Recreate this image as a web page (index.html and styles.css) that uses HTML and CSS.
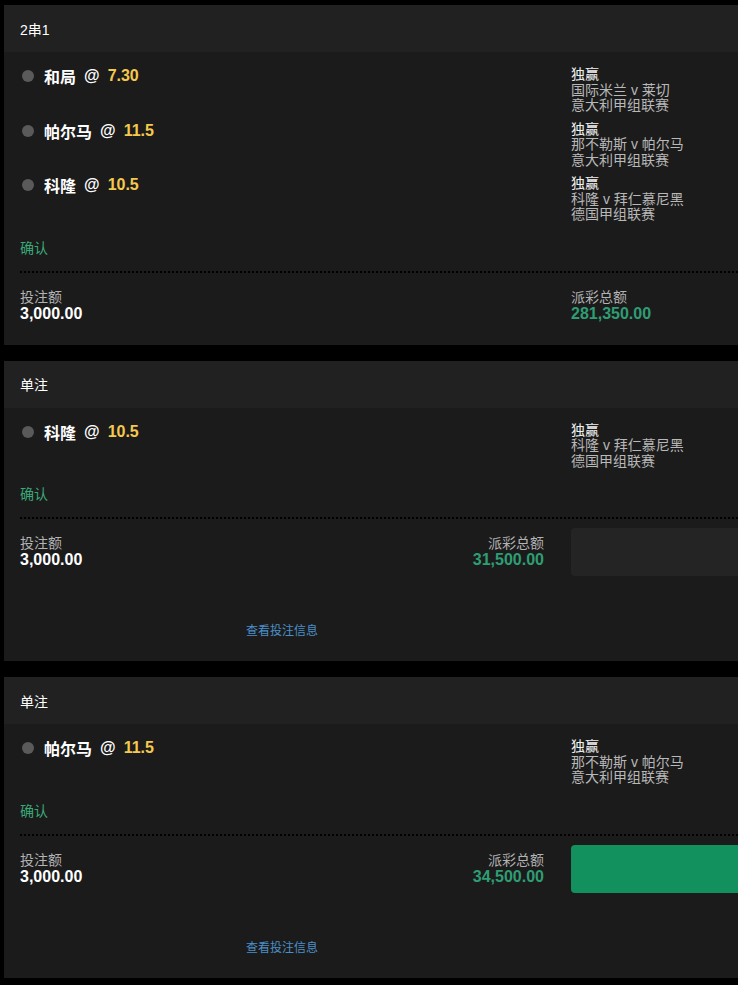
FILE: index.html
```html
<!DOCTYPE html>
<html lang="zh-CN">
<head>
    <meta charset="UTF-8">
    <meta name="viewport" content="width=device-width, initial-scale=1.0">
    <title>投注记录</title>
    <link rel="stylesheet" href="styles.css">
</head>
<body>
    <div class="page">

        <!-- 串关 -->
        <div class="card">
            <div class="card-head">2串1</div>
            <div class="card-body">
                <div class="selections">
                    <div class="selection">
                        <div class="sel-name"><span class="dot"></span><span>和局</span><span>@</span><span class="odds">7.30</span></div>
                        <div class="sel-info">
                            <div class="market">独赢</div>
                            <div>国际米兰 v 莱切</div>
                            <div>意大利甲组联赛</div>
                        </div>
                    </div>
                    <div class="selection">
                        <div class="sel-name"><span class="dot"></span><span>帕尔马</span><span>@</span><span class="odds">11.5</span></div>
                        <div class="sel-info">
                            <div class="market">独赢</div>
                            <div>那不勒斯 v 帕尔马</div>
                            <div>意大利甲组联赛</div>
                        </div>
                    </div>
                    <div class="selection">
                        <div class="sel-name"><span class="dot"></span><span>科隆</span><span>@</span><span class="odds">10.5</span></div>
                        <div class="sel-info">
                            <div class="market">独赢</div>
                            <div>科隆 v 拜仁慕尼黑</div>
                            <div>德国甲组联赛</div>
                        </div>
                    </div>
                </div>
                <div class="status">确认</div>
                <div class="divider"></div>
                <div class="summary summary-multi">
                    <div class="amount">
                        <div class="amount-label">投注额</div>
                        <div class="amount-value">3,000.00</div>
                    </div>
                    <div class="amount">
                        <div class="amount-label">派彩总额</div>
                        <div class="amount-value payout">281,350.00</div>
                    </div>
                </div>
            </div>
        </div>

        <!-- 单注 -->
        <div class="card">
            <div class="card-head">单注</div>
            <div class="card-body">
                <div class="selections">
                    <div class="selection">
                        <div class="sel-name"><span class="dot"></span><span>科隆</span><span>@</span><span class="odds">10.5</span></div>
                        <div class="sel-info">
                            <div class="market">独赢</div>
                            <div>科隆 v 拜仁慕尼黑</div>
                            <div>德国甲组联赛</div>
                        </div>
                    </div>
                </div>
                <div class="status">确认</div>
                <div class="divider"></div>
                <div class="summary">
                    <div class="amounts">
                        <div class="amount">
                            <div class="amount-label">投注额</div>
                            <div class="amount-value">3,000.00</div>
                        </div>
                        <div class="amount amount-right">
                            <div class="amount-label">派彩总额</div>
                            <div class="amount-value payout">31,500.00</div>
                        </div>
                    </div>
                    <div class="place-box"></div>
                </div>
                <div class="info-row"><a class="info-link" href="#">查看投注信息</a></div>
            </div>
        </div>

        <div class="card">
            <div class="card-head">单注</div>
            <div class="card-body">
                <div class="selections">
                    <div class="selection">
                        <div class="sel-name"><span class="dot"></span><span>帕尔马</span><span>@</span><span class="odds">11.5</span></div>
                        <div class="sel-info">
                            <div class="market">独赢</div>
                            <div>那不勒斯 v 帕尔马</div>
                            <div>意大利甲组联赛</div>
                        </div>
                    </div>
                </div>
                <div class="status">确认</div>
                <div class="divider"></div>
                <div class="summary">
                    <div class="amounts">
                        <div class="amount">
                            <div class="amount-label">投注额</div>
                            <div class="amount-value">3,000.00</div>
                        </div>
                        <div class="amount amount-right">
                            <div class="amount-label">派彩总额</div>
                            <div class="amount-value payout">34,500.00</div>
                        </div>
                    </div>
                    <div class="place-box place-box-green"></div>
                </div>
                <div class="info-row"><a class="info-link" href="#">查看投注信息</a></div>
            </div>
        </div>

    </div>
</body>
</html>
```

FILE: styles.css
```css
/* General */
body {
    margin: 0;
    background: #000;
    color: #fff;
    font-family: "Liberation Sans", "Noto Sans CJK SC", sans-serif;
    overflow: hidden;
}

.page {
    display: flex;
    flex-direction: column;
    gap: 16px;
    padding: 5px 0 0 4px;
}

/* Card */
.card {
    width: 1000px;
    background: #1b1b1b;
}

.card-head {
    height: 47px;
    padding: 0 16px;
    display: flex;
    align-items: center;
    background: #212121;
    font-size: 14px;
}

.card-body {
    padding: 15px 16px 15px;
}

/* Selections */
.selections {
    display: flex;
    flex-direction: column;
    gap: 8px;
}

.selection {
    display: grid;
    grid-template-columns: 524px 1fr;
    column-gap: 27px;
}

.sel-name {
    display: flex;
    align-items: center;
    gap: 8px;
    height: 18px;
    font-size: 16px;
    font-weight: bold;
}

.dot {
    width: 12px;
    height: 12px;
    margin: 0 2px;
    border-radius: 50%;
    background: #5a5a5a;
}

.odds {
    color: #f5c94e;
}

.sel-info {
    font-size: 14px;
    line-height: 15.5px;
    color: #b8b8b8;
}

.sel-info .market {
    color: #f2f2f2;
}

.status {
    margin-top: 17px;
    font-size: 14px;
    line-height: 16px;
    color: #3aa97a;
}

.divider {
    margin-top: 15px;
    height: 2px;
    background-image: linear-gradient(to right, #000 50%, transparent 50%);
    background-size: 4px 2px;
}

/* Summary */
.summary {
    margin-top: 9px;
    display: grid;
    grid-template-columns: 524px 1fr;
    column-gap: 27px;
    align-items: center;
    min-height: 48px;
}

.amounts {
    display: flex;
    justify-content: space-between;
}

.amount-right {
    text-align: right;
}

.amount-label {
    font-size: 14px;
    line-height: 15px;
    color: #b3b3b3;
}

.amount-value {
    font-size: 16px;
    line-height: 17px;
    font-weight: bold;
}

.amount-value.payout {
    color: #2f9d74;
}

.place-box {
    height: 48px;
    border-radius: 4px;
    background: #242424;
}

.place-box-green {
    background: #12915f;
}

.info-row {
    width: 524px;
    margin-top: 47px;
    padding-bottom: 8px;
    text-align: center;
    line-height: 14px;
}

.info-link {
    font-size: 12px;
    color: #4b8fc8;
    text-decoration: none;
}
```
